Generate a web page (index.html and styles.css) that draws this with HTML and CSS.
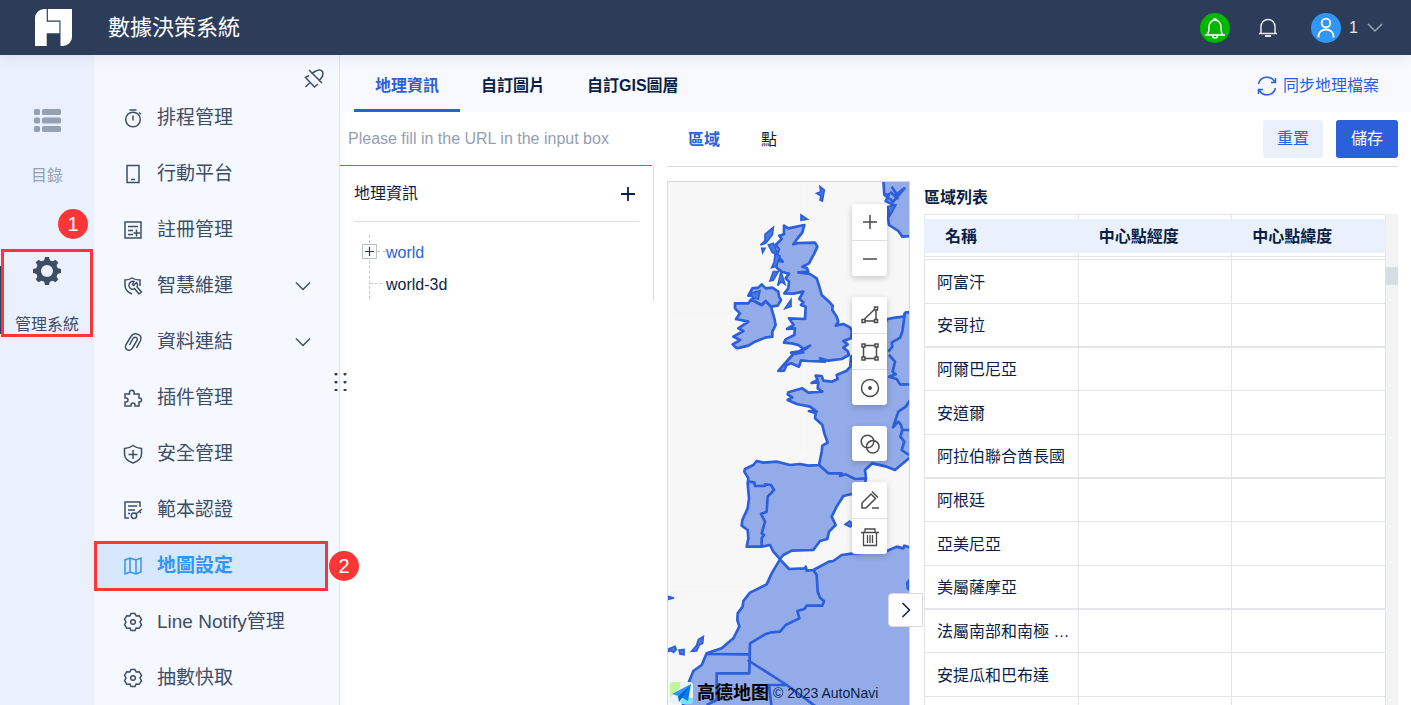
FILE: index.html
```html
<!DOCTYPE html>
<html lang="zh-Hant">
<head>
<meta charset="utf-8">
<title>數據決策系統</title>
<link rel="stylesheet" href="styles.css">
</head>
<body>
<div class="app">
  <header class="topbar">
    <svg class="logo" viewBox="0 0 37 37" fill="#fff"><path d="M9 0h2.700v12.700h12.700v11.600H11.700V37H0V9a9 9 0 0 1 9-9z"/><path d="M12.900 0H37v28a9 9 0 0 1-9 9h-2.500V11.500H12.900z"/></svg>
    <h1 class="brand">數據決策系統</h1>
    <div class="top-actions">
      <button class="round green" aria-label="通知"><svg width="22" height="22" viewBox="0 0 22 22" fill="none" stroke="#fff" stroke-width="1.500"><path d="M1 18h20M3 18c2-2 2-4 2-8a6 7 0 0 1 12 0c0 4 0 6 2 8M8.500 18.500a2.500 2.500 0 0 0 5 0M9.500 3.500a1.500 1.800 0 0 1 3 0"/></svg></button>
      <button class="bare" aria-label="訊息"><svg width="20" height="20" viewBox="0 0 20 20" fill="none" stroke="#e4e7ec" stroke-width="1.500"><path d="M1 15.500h18M3 15V8.500a7 7 0 0 1 14 0V15"/><path d="M7 18h6" stroke-width="2"/></svg></button>
      <button class="user"><span class="round blue"><svg width="20" height="22" viewBox="0 0 20 22" fill="none" stroke="#fff" stroke-width="1.800"><circle cx="10" cy="6" r="4.300"/><path d="M2.500 20.500v-1.500a7.500 6.500 0 0 1 15 0v1.500"/></svg></span><span>1</span><svg width="16" height="10" viewBox="0 0 16 10" fill="none" stroke="#9aa3b2" stroke-width="1.500"><path d="M1 1l7 7 7-7"/></svg></button>
    </div>
  </header>

  <nav class="rail">
    <a class="rail-item muted" href="#catalog"><svg width="27" height="23" viewBox="0 0 27 23" fill="#94a0b4"><rect width="6" height="6" rx="1.500"/><rect x="8" width="19" height="6" rx="1.500"/><rect y="8.500" width="6" height="6" rx="1.500"/><rect x="8" y="8.500" width="19" height="6" rx="1.500"/><rect y="17" width="6" height="6" rx="1.500"/><rect x="8" y="17" width="19" height="6" rx="1.500"/></svg><span>目錄</span></a>
    <a class="rail-item current" href="#manage"><svg width="28" height="28" viewBox="0 0 28 28"><g fill="#3d4d68"><circle cx="14" cy="14" r="11"/><path d="M11 4l1-4h4l1 4v20l-1 4h-4l-1-4z"/><path d="M11 4l1-4h4l1 4v20l-1 4h-4l-1-4z" transform="rotate(45 14 14)"/><path d="M11 4l1-4h4l1 4v20l-1 4h-4l-1-4z" transform="rotate(90 14 14)"/><path d="M11 4l1-4h4l1 4v20l-1 4h-4l-1-4z" transform="rotate(135 14 14)"/></g><circle cx="14" cy="14" r="6" fill="#eaf1fd"/></svg><span>管理系統</span><b class="step step-one">1</b></a>
  </nav>

  <aside class="sidebar">
    <button class="pin" aria-label="取消固定"><svg width="20" height="20" viewBox="0 0 20 20" fill="none" stroke="#3d4d68" stroke-width="1.500"><path d="M5 1l13 13M1.500 18l4-4M5 6.500L1.500 8.500l9 9.500 3.500-3M8.500 4l2.500-1.500q5-3 7.500 0 1.500 4-2 7.500l-1 1.500"/></svg></button>
    <ul class="menu">
      <li><a href="#m1"><svg class="ico" viewBox="0 0 18 18"><circle cx="9" cy="10.500" r="7.300"/><path d="M9 6.500v5M5.500 1h7M15 3.500l2 1.800"/></svg><span>排程管理</span></a></li>
      <li><a href="#m2"><svg class="ico" viewBox="0 0 18 18"><path d="M3 .5h12v17H3zM7 14.500h4"/></svg><span>行動平台</span></a></li>
      <li><a href="#m3"><svg class="ico" viewBox="0 0 18 18"><path d="M1 1h16v16H1zM4 5.500h10M4 9.500h5M4 13.500h5M12.500 8.500v7M9.500 12h6.500"/></svg><span>註冊管理</span></a></li>
      <li><a href="#m4"><svg class="ico" viewBox="0 0 18 18"><path d="M8 17C3 15 1 12 1 8V3q4 0 7-2 3 2 8 2v6M10 4.500A4 4 0 0 0 5 9c.5 3 3.500 4 5.500 2.500L15 17l2.500-2-4.500-5c1-2 .5-3.500-.5-4.500l-3 3-1-1z"/></svg><span>智慧維運</span><svg class="chev" viewBox="0 0 16 10"><path d="M1 1.500l7 7 7-7"/></svg></a></li>
      <li><a href="#m5"><svg class="ico" viewBox="0 0 18 18"><path d="M12.500 15l4-7.500c3-6-6.500-9-9.500-4L2 11.500c-2.500 5 4 8 6.500 3.500L13 7.500c1.500-3-2.500-4.500-4-2L5.500 12"/></svg><span>資料連結</span><svg class="chev" viewBox="0 0 16 10"><path d="M1 1.500l7 7 7-7"/></svg></a></li>
      <li><a href="#m6"><svg class="ico" viewBox="0 0 18 18"><path d="M1 5h4.500V3.500a2.300 2.300 0 0 1 4.600 0V5H15v4h.5a2 2 0 0 1 0 4H15v4h-4v-1a2 2 0 0 0-4 0v1H1v-4h1a2 2 0 0 0 0-4H1z"/></svg><span>插件管理</span></a></li>
      <li><a href="#m7"><svg class="ico" viewBox="0 0 18 18"><path d="M9 .5q4 3 8.500 3V9q0 6-8.500 9Q.5 15 .5 9V3.500Q5 3.500 9 .5zM9 5v9M4.500 9.500h9"/></svg><span>安全管理</span></a></li>
      <li><a href="#m8"><svg class="ico" viewBox="0 0 18 18"><path d="M5 17H1V1h15v5M4 5h9M4 9h7M4 12.500h2M12 13l6-5M15 10l2 2"/><circle cx="10" cy="14.800" r="2.700"/></svg><span>範本認證</span></a></li>
      <li><a class="active" href="#m9" aria-current="page"><svg class="ico" viewBox="0 0 18 18"><path d="M1 3l5-2 6 2 5-2v14l-5 2-6-2-5 2zM6 1v14M12 3v14"/></svg><span>地圖設定</span><b class="step step-two">2</b></a></li>
      <li><a href="#m10"><svg class="ico" viewBox="0 0 18 18"><path d="M7 .5h4l1.200 2.500 3-.3 2.300 3.600L16 9l1.500 2.700-2.300 3.600-3-.3L11 17.500H7L5.800 15l-3 .3L.5 11.700 2 9 .5 6.300l2.300-3.600 3 .3z"/><circle cx="9" cy="9" r="2.300"/></svg><span>Line Notify管理</span></a></li>
      <li><a href="#m11"><svg class="ico" viewBox="0 0 18 18"><path d="M7 .5h4l1.200 2.500 3-.3 2.300 3.600L16 9l1.500 2.700-2.300 3.600-3-.3L11 17.500H7L5.800 15l-3 .3L.5 11.700 2 9 .5 6.300l2.300-3.600 3 .3z"/><circle cx="9" cy="9" r="2.300"/></svg><span>抽數快取</span></a></li>
    </ul>
    <i class="grip"></i>
  </aside>

  <main class="main">
    <div class="tabs">
      <button class="tab on">地理資訊</button><button class="tab">自訂圖片</button><button class="tab">自訂GIS圖層</button>
      <button class="sync"><svg width="20" height="20" viewBox="0 0 20 20" fill="none" stroke="#2b5fdb" stroke-width="1.500"><path d="M1.500 8a8.700 8.700 0 0 1 16-2.500M18.500 2v4.500H14M18.500 12a8.700 8.700 0 0 1-16 2.500M1.500 18v-4.500H6"/></svg>同步地理檔案</button>
    </div>
    <div class="content">
      <section class="left">
        <input class="url" type="text" aria-label="URL" placeholder="Please fill in the URL in the input box">
        <div class="tree-panel">
          <div class="tree-head"><h2>地理資訊</h2><button class="bare" aria-label="新增"><svg width="14" height="14" viewBox="0 0 14 14" stroke="#0b1e45" stroke-width="1.800"><path d="M7 0v14M0 7h14"/></svg></button></div>
          <ul class="tree">
            <li class="sel"><button class="expand" aria-label="展開"><svg width="9" height="9" viewBox="0 0 9 9" stroke="#2d3d59" stroke-width="1.200"><path d="M4.500 0v9M0 4.500h9"/></svg></button><i></i><span>world</span></li>
            <li><i></i><span>world-3d</span></li>
          </ul>
        </div>
      </section>
      <section class="right">
        <div class="tools">
          <button class="mode on">區域</button><button class="mode">點</button>
          <button class="btn reset">重置</button><button class="btn save">儲存</button>
        </div>
        <div class="split">
          <div class="map">
            <svg class="geo" viewBox="9 21 723 1569" preserveAspectRatio="xMinYMin slice">
              <g stroke="#fff" stroke-width="2" opacity=".8"><path d="M417 21v1569M9 432h723M9 837h723M9 1244h723"/></g>
              <g fill="#93abe8" stroke="#2b5fdb" stroke-width="8" stroke-linejoin="round">
                <path d="M357 152L370 160 418 150 412 172 398 190 385 208 400 204 450 203 457 215 448 235 432 265 412 275 426 280 430 290 400 292 435 297 455 310 463 335 470 360 490 378 503 392 502 405 515 425 520 440 512 452 535 447 556 458 561 470 558 490 535 498 548 508 535 518 548 528 552 540 530 552 490 557 465 550 480 560 430 558 408 556 402 575 378 565 365 570 357 587 340 588 385 537 415 532 378 533 400 530 435 512 418 524 400 510 380 505 357 503 362 493 388 480 390 460 366 462 386 450 372 430 420 432 422 395 408 390 415 382 403 372 415 350 385 356 358 355 370 340 372 320 362 310 372 296 350 290 335 278 330 255 353 260 335 240 342 222 332 210 350 192 343 182 357 178z"/>
                <path d="M210 385L250 385 258 374 290 390 302 378 318 395 328 430 332 450 322 470 322 485 300 488 270 500 250 512 215 520 203 508 225 495 205 485 235 468 220 460 250 440 213 432 225 415 210 400z"/>
                <path d="M262 340L280 338 290 328 302 340 322 338 340 350 342 365 348 375 338 392 318 395 302 378 290 390 260 374 270 362 250 362z"/>
                <path d="M655 15L658 60 672 58 662 78 690 92 665 104 672 150 700 168 712 185 740 183V15zM658 60L685 80 718 40 695 58 680 35M690 92L668 130M675 50L700 72"/>
                <path d="M668 432L690 428 715 425 722 412 745 412V837L732 850 690 885 665 875 622 865 600 885 603 910 600 925 561 957 535 963 515 995 500 1025 512 1050 492 1070 487 1092 465 1098 445 1125 380 1127 355 1140 345 1152 325 1130 315 1110 290 1115 245 1115 250 1090 248 1065 230 1052 232 1035 248 1000 252 970 248 925 250 910 238 890 240 882 265 870 275 858 295 863 335 860 375 870 405 867 430 872 462 870 470 830 472 812 488 803 478 775 472 750 450 730 452 715 432 708 455 710 435 695 395 687 368 675 382 667 368 658 370 652 412 640 430 653 472 650 458 640 460 622 440 624 458 615 452 602 470 603 475 617 500 620 518 612 515 600 545 587 556 575 558 545 600 520z"/>
                <path d="M345 1153L372 1182 420 1180 422 1175 425 1187 445 1185 492 1160 505 1158 530 1140 560 1136 665 1128 695 1115 715 1120 718 1112 745 1120V1605H50L72 1520 85 1488 110 1470 125 1435 170 1420 205 1390 223 1355 217 1335 218 1315 233 1295 235 1278 255 1253 305 1228 320 1195z"/>
              </g>
              <g fill="none" stroke="#2b5fdb" stroke-width="8" stroke-linejoin="round">
                <path d="M462 870L490 895 530 895 525 903 542 898 570 912 603 910M250 920L268 922 270 933 300 933 300 928 318 930 327 945 308 965 305 1010 288 1017 300 1040 290 1075 297 1080 290 1090 290 1115"/>
                <path d="M445 1185L455 1200 458 1250 465 1268 477 1278 472 1292 425 1292 418 1302 397 1308 403 1330 362 1350 345 1370 320 1372 300 1378 255 1405 253 1495H155V1575L125 1590M125 1437L250 1438M248 1455L365 1530 460 1600M320 1600L312 1530H365"/>
                <path d="M720 412L712 470 705 488 680 503 682 515 670 530M672 540L690 560 683 590 692 598 672 605 695 612 705 628 732 628M745 660L722 695 700 710 684 757 700 740 708 750 712 765 732 765M712 765L706 785 718 800 710 825 732 840"/>
              </g>
              <g fill="#4b78df" stroke="#2b5fdb" stroke-width="5">
                <path d="M465 35L478 45 472 78 465 75 468 62 455 55 467 50zM408 120L427 133 408 136zM325 157L322 180 302 205 286 210 300 197 300 178zM290 220l10 0-7 13zM310 210l15-5 8 18 4 15-15-5zM330 235l15 8-10 30-15 5 8-18zM325 290l15 0-15 26-10 2zM348 290l12 38-12-8-10 12zM378 374l0 20-18 6zM255 355l30-8-5 25-15-3zM668 95l24-5-18 32z"/>
                <path d="M115 1385l-2 20-10 5-8 18-15 1 15-18 5-17zM10 1422l20-8 4 10-8 8-8-5-8 2zM42 1425l15-2 0 16-12-2zM9 1264l18 5-18 4zM732 1215l-7 8 2 18 5 4zM540 1048l14-10 10 10-8 8z"/>
                <path d="M212 525h8" stroke="#bccbf0"/>
              </g>
            </svg>
            <div class="controls">
              <div class="group">
                <button aria-label="放大"><svg class="ctl" viewBox="0 0 20 20"><path d="M10 3v14M3 10h14"/></svg></button>
                <button aria-label="縮小"><svg class="ctl" viewBox="0 0 20 20"><path d="M3 10h14"/></svg></button>
              </div>
              <div class="group">
                <button aria-label="多邊形"><svg class="ctl" viewBox="0 0 20 20"><path d="M5 16h9M16 5v9M4.500 14L14.500 4.500M2 14.500h3v3H2zM14.500 14.500h3v3h-3zM14.500 2h3v3h-3z"/></svg></button>
                <button aria-label="矩形"><svg class="ctl" viewBox="0 0 20 20"><path d="M5 3.500h10M5 16.500h10M3.500 5v10M16.500 5v10M2 2h3v3H2zM15 2h3v3h-3zM2 15h3v3H2zM15 15h3v3h-3z"/></svg></button>
                <button aria-label="圓形"><svg class="ctl" viewBox="0 0 20 20"><circle cx="10" cy="10" r="8.500"/><circle cx="10" cy="10" r="1.200" fill="#4a4a4a"/></svg></button>
              </div>
              <div class="group">
                <button aria-label="合併"><svg class="ctl" viewBox="0 0 20 20"><circle cx="7.500" cy="7.500" r="6.300"/><circle cx="12.800" cy="12.800" r="6.300"/></svg></button>
              </div>
              <div class="group">
                <button aria-label="編輯"><svg class="ctl" viewBox="0 0 20 20"><path d="M2 18v-5L11 4l4.500 4.500L6 18zM12 1.500l6 6M12 18h7"/></svg></button>
                <button aria-label="刪除"><svg class="ctl" viewBox="0 0 20 20"><path d="M1 5.500h18M5 5V2h10v3M3.500 6v12.500h13V6M7.500 8v8M10 8v8M12.500 8v8" stroke-width="1.300"/></svg></button>
              </div>
            </div>
            <div class="credit"><svg width="23" height="22" viewBox="0 0 23 22"><rect width="23" height="22" rx="4" fill="#e9f3f4"/><path d="M4 0h6v6L0 15V4a4 4 0 0 1 4-4z" fill="#c2f59a"/><path d="M10 20l4-5 9 1v2a4 4 0 0 1-4 4h-7z" fill="#72e4fb"/><path d="M21 2L2 12l6 2z" fill="#2a94ff"/><path d="M21 2l-3 17-7-4z" fill="#087cf5"/><path d="M21 2L8 14l1 6 3-4z" fill="#0564d8"/></svg><strong>高德地图</strong><span>© 2023 AutoNavi</span></div>
            <button class="collapse" aria-label="收合"><svg width="10" height="16" viewBox="0 0 10 16" fill="none" stroke="#0b1e45" stroke-width="1.500"><path d="M1.500 1l7 7-7 7"/></svg></button>
          </div>
          <div class="list">
            <h2>區域列表</h2>
            <div class="scroller">
              <div class="rows">
                <table>
                  <thead><tr><th><span>名稱</span></th><th><span>中心點經度</span></th><th><span>中心點緯度</span></th></tr></thead>
                  <tbody>
                    <tr><td>阿富汗</td><td></td><td></td></tr>
                    <tr><td>安哥拉</td><td></td><td></td></tr>
                    <tr><td>阿爾巴尼亞</td><td></td><td></td></tr>
                    <tr><td>安道爾</td><td></td><td></td></tr>
                    <tr><td>阿拉伯聯合酋長國</td><td></td><td></td></tr>
                    <tr><td>阿根廷</td><td></td><td></td></tr>
                    <tr><td>亞美尼亞</td><td></td><td></td></tr>
                    <tr><td>美屬薩摩亞</td><td></td><td></td></tr>
                    <tr><td>法屬南部和南極 …</td><td></td><td></td></tr>
                    <tr><td>安提瓜和巴布達</td><td></td><td></td></tr>
                    <tr><td></td><td></td><td></td></tr>
                  </tbody>
                </table>
              </div>
              <div class="track"><i></i></div>
            </div>
          </div>
        </div>
      </section>
    </div>
  </main>
</div>
</body>
</html>
```
FILE: styles.css
```css
* { box-sizing: border-box; }
body { margin: 0; font: 16px/24px "Liberation Sans", "Noto Sans CJK TC", sans-serif; color: #0b1e45; background: #fff; }
h1, h2, ul { margin: 0; padding: 0; }
li { list-style: none; }
svg { display: block; flex: none; }
a { color: inherit; text-decoration: none; }
button { margin: 0; padding: 0; border: 0; background: none; font: inherit; color: inherit; cursor: pointer; }

.app { display: grid; grid-template: 55px minmax(0, 1fr) / 94px 246px minmax(0, 1fr); height: 100vh; overflow: hidden; }

.topbar { grid-column: 1 / -1; display: flex; align-items: center; padding: 0 28px 0 35px; background: #2d3d59; color: #fff; box-shadow: 0 2px 14px rgba(0, 0, 0, .08); z-index: 2; }
.logo { width: 37px; height: 37px; }
.brand { margin-left: 36px; font-size: 22px; line-height: 32px; font-weight: 400; }
.top-actions { display: flex; align-items: center; gap: 28px; margin-left: auto; }
.round { display: flex; align-items: center; justify-content: center; width: 30px; height: 30px; border-radius: 50%; }
.green { background: #00b800; }
.blue { background: #3296f5; }
.user { display: flex; align-items: center; gap: 8px; color: #e4e7ec; }
.user > svg { margin-left: 1px; }
.top-actions .user { margin-left: 5px; }

.rail { padding-top: 54px; background: #eaf1fd; }
.rail-item { position: relative; display: flex; flex-direction: column; align-items: center; white-space: nowrap; }
.muted { gap: 32px; height: 140px; color: #94a0b4; }
.current { gap: 28px; height: 88px; margin: 0 1px; padding-top: 5px; border: 3px solid #fc3636; color: #3d4d68; }
.current::before { content: ""; position: absolute; left: -4px; top: 14px; width: 1px; height: 68px; background: #2d3d59; }
.step { position: absolute; width: 30px; height: 30px; border-radius: 50%; background: #fc3636; color: #fff; font-size: 20px; line-height: 30px; font-weight: 400; text-align: center; z-index: 3; }
.step-one { right: 2px; top: -43px; }
.step-two { left: 100%; top: 7px; margin-left: 4px; }

.sidebar { position: relative; display: flex; flex-direction: column; padding-right: 11px; background: #f5f8ff; border-right: 1px solid #dfe3ec; color: #3d4d68; z-index: 1; }
.pin { align-self: flex-end; height: 24px; margin: 12px 4px 2px 0; }
.menu { display: flex; flex-direction: column; gap: 6px; font-size: 19px; line-height: 28px; }
.menu a { position: relative; display: flex; align-items: center; gap: 15px; height: 50px; padding: 0 17px 0 30px; white-space: nowrap; }
.menu .active { background: #d7e7fd; color: #3296f5; font-weight: 700; border: 3px solid #fc3636; padding-left: 27px; }
.ico { width: 18px; height: 18px; fill: none; stroke: currentColor; stroke-width: 1.500; overflow: visible; }
.chev { width: 16px; height: 10px; margin-left: auto; fill: none; stroke: currentColor; stroke-width: 1.500; }
.grip { position: absolute; right: -8px; top: 318px; width: 14px; height: 18px; background: radial-gradient(circle at 3px 1px, #2d3d59 1px, transparent 2px) 0 0 / 9px 8px; }

.main { display: flex; flex-direction: column; min-width: 0; }
.tabs { display: flex; flex: none; height: 57px; padding: 0 32px 0 14px; background: #f7f9fe; white-space: nowrap; }
.tab { padding: 7px 21px 0; font-weight: 700; border-bottom: 3px solid transparent; }
.tab.on { color: #2b5fdb; border-color: #2b5fdb; }
.sync { display: flex; align-items: center; gap: 6px; margin-left: auto; padding-top: 4px; color: #2b5fdb; }
.content { display: grid; grid-template-columns: 314px minmax(0, 1fr); gap: 13px; flex: 1; min-height: 0; padding-right: 13px; }
.url { display: block; width: 312px; height: 54px; padding: 0 8px; border: 0; border-bottom: 1px solid #de4b4b; font: inherit; outline: 0; }
.url::placeholder { color: #94a0b4; opacity: 1; }
.tree-panel { height: 135px; padding: 0 14px; border-right: 1px solid #d9dce6; }
.tree-head { display: flex; align-items: center; justify-content: space-between; height: 56px; padding-right: 4px; border-bottom: 1px solid #d9dce6; }
h2 { font-size: 16px; line-height: 26px; font-weight: 400; }
.tree { margin: 13px 0 0 15px; border-left: 1px dashed #c3c8d2; }
.tree li { display: flex; align-items: center; height: 32px; }
.tree span { padding-top: 3px; }
.tree i { width: 12px; margin-right: 4px; border-top: 1px dashed #c3c8d2; }
.sel { color: #2b5fdb; }
.expand { display: flex; align-items: center; justify-content: center; width: 15px; height: 15px; margin-left: -8px; border: 1px solid #b9c0ce; background: #fff; }
.tree .sel i { width: 9px; margin-right: 0; }

.right { display: flex; flex-direction: column; min-width: 0; min-height: 0; }
.tools { display: flex; align-items: center; flex: none; height: 55px; padding-left: 21px; border-bottom: 1px solid #d9dce6; }
.mode { margin-right: 41px; padding-top: 2px; }
.mode.on { color: #2b5fdb; font-weight: 700; }
.btn { height: 38px; border-radius: 3px; }
.reset { width: 60px; margin: 0 13px 0 auto; background: #eaf0fc; color: #2b5fdb; }
.save { width: 62px; background: #2b5fdb; color: #fff; }
.split { display: grid; grid-template-columns: minmax(0, 243fr) minmax(0, 474fr); gap: 14px; flex: 1; min-height: 0; padding-top: 14px; }
.map { position: relative; min-height: 0; border: 1px solid #d5d8df; border-bottom: 0; background: #f7f7f8; }
.geo { position: absolute; inset: 0; width: 100%; height: 100%; }
.controls { position: absolute; right: 22px; top: 22px; display: flex; flex-direction: column; gap: 21px; }
.group { display: flex; flex-direction: column; border-radius: 3px; background: #fff; box-shadow: 0 2px 6px rgba(0, 0, 0, .2); }
.group button { display: flex; align-items: center; justify-content: center; width: 35px; height: 36px; }
.group button:only-child { height: 35px; }
.group button + button { border-top: 1px solid #dcdfe3; }
.ctl { width: 20px; height: 20px; fill: none; stroke: #4a4a4a; stroke-width: 1.500; }
.credit { position: absolute; left: 2px; bottom: 0; display: flex; align-items: center; font-size: 14px; white-space: nowrap; }
.credit strong { margin: 0 4px; font-size: 18px; color: #000; }
.collapse { position: absolute; right: -14px; bottom: 78px; display: flex; align-items: center; justify-content: center; width: 35px; height: 34px; border: 1px solid #d5d8df; border-radius: 4px 0 0 4px; background: #fff; z-index: 1; }

.list { display: flex; flex-direction: column; min-height: 0; overflow: hidden; padding-top: 4px; }
.list h2 { flex: none; height: 29px; font-weight: 700; }
.scroller { display: flex; flex: 1; min-height: 0; overflow: hidden; }
.rows { flex: 1; min-width: 0; }
table { width: 100%; table-layout: fixed; border-collapse: separate; border-spacing: 0; border-right: 1px solid #e3e5ea; }
th, td { border-left: 1px solid #e3e5ea; text-align: left; white-space: nowrap; }
th { height: 46px; padding: 4px 0 3px; border-top: 1px solid #e3e5ea; border-bottom: 4px double #e3e5ea; }
th span { display: block; position: relative; height: 34px; margin: 0 -1px; padding-left: 21px; line-height: 36px; background: #eaf1fd; }
td { height: 44px; padding: 2px 12px 0; border-bottom: 1px solid #e3e5ea; }
tbody tr:nth-child(3n) td { height: 43px; }
tbody tr:nth-child(3n + 2) td { border-bottom-width: 2px; }
.track { flex: none; width: 12px; background: #f2f3f5; }
.track i { display: block; height: 18px; margin-top: 53px; background: #d9dce2; }
```
